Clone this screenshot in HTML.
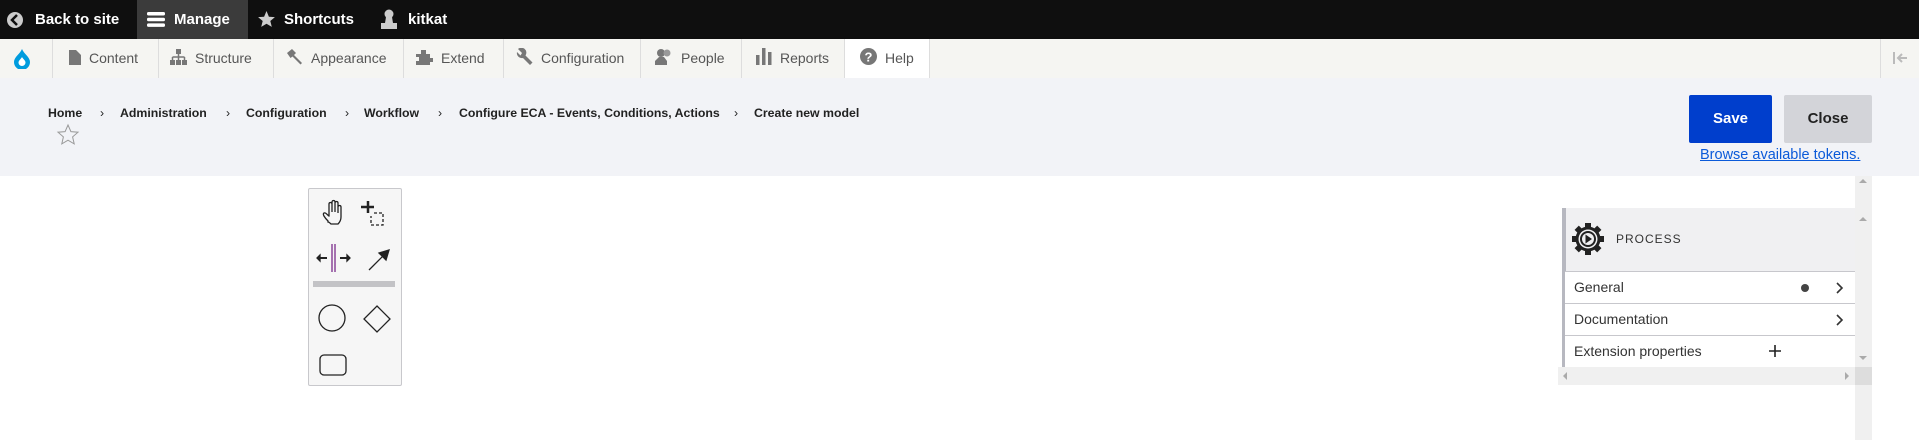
<!DOCTYPE html>
<html><head><meta charset="utf-8"><style>
*{margin:0;padding:0;box-sizing:border-box}
body{width:1919px;height:440px;background:#fff;font-family:"Liberation Sans",sans-serif;position:relative;overflow:hidden}
.abs{position:absolute}
.top{left:0;top:0;width:1919px;height:39px;background:#0f0f0f;color:#fff;font-weight:bold;font-size:15px}
.top span{position:absolute;top:11px}
.bar{left:0;top:39px;width:1919px;height:39px;background:#f5f5f2;box-shadow:0 2px 3px rgba(0,0,0,.35);font-size:14px;color:#565656}
.it{position:absolute;top:0;height:39px;border-right:1px solid #ddd;padding-left:16px;line-height:39px;white-space:nowrap}
.it svg{vertical-align:-2px;margin-right:8px}
.gray{left:0;top:78px;width:1919px;height:98px;background:#f2f3f7}
.bc{position:absolute;top:106px;font-size:12.3px;font-weight:bold;color:#222;white-space:nowrap}
.sep{font-weight:normal}
.row{position:absolute;left:1565px;width:290px;height:32px;border-top:1px solid #c7c7cc;background:#fff;font-size:14px;color:#333;line-height:31px;padding-left:9px}
</style></head><body>
<div class="abs top">
<svg class="abs" style="left:6px;top:11px" width="18" height="18"><circle cx="9" cy="9" r="8" fill="#ccc"/><path d="M11 4L6 9l5 5" stroke="#0f0f0f" stroke-width="2.5" fill="none"/></svg>
<span style="left:35px">Back to site</span>
<div class="abs" style="left:137px;top:0;width:111px;height:39px;background:#3b3b3b"></div>
<svg class="abs" style="left:147px;top:12px" width="18" height="15"><rect y="0" width="18" height="3.5" rx="1.5" fill="#fff"/><rect y="5.7" width="18" height="3.5" rx="1.5" fill="#fff"/><rect y="11.4" width="18" height="3.5" rx="1.5" fill="#fff"/></svg>
<span style="left:174px">Manage</span>
<svg class="abs" style="left:257px;top:10px" width="19" height="18"><path d="M9.5 1l2.4 5.7 6 .4-4.6 3.9 1.5 5.9-5.3-3.2-5.3 3.2 1.5-5.9L1.1 7.1l6-.4z" fill="#ccc"/></svg>
<span style="left:284px">Shortcuts</span>
<svg class="abs" style="left:381px;top:9px" width="16" height="20"><circle cx="8" cy="5" r="4.5" fill="#ccc"/><path d="M5 8h6l1 6h4v6H0v-6h4z" fill="#ccc"/></svg>
<span style="left:408px">kitkat</span>
</div>
<div class="abs bar">
<div class="it" style="left:0;width:53px;padding:0"><svg style="position:absolute;left:13px;top:9px" width="18" height="21"><path d="M9 1c2 5 8 8 8 13a8 8 0 0 1-16 0C1 9 7 6 9 1z" fill="#009cde"/><path d="M9 9c1 2 3.5 3.5 3.5 5.5a3.5 3.5 0 0 1-7 0c0-2 2.5-3.5 3.5-5.5z" fill="#fff"/></svg></div>
<div class="it" style="left:53px;width:106px"><svg width="12" height="15"><path d="M0 0h7l5 5v10H0z" fill="#777"/></svg>Content</div>
<div class="it" style="left:159px;width:115px;padding-left:11px"><svg width="17" height="16"><rect x="6" y="0" width="5" height="5" fill="#777"/><path d="M8.5 5v3M2.5 8h12M2.5 8v3M8.5 8v3M14.5 8v3" stroke="#777" stroke-width="1.5"/><rect x="0" y="11" width="5" height="5" fill="#777"/><rect x="6" y="11" width="5" height="5" fill="#777"/><rect x="12" y="11" width="5" height="5" fill="#777"/></svg>Structure</div>
<div class="it" style="left:274px;width:130px;padding-left:12px"><svg width="17" height="17"><path d="M1 5l5-4 4 4-2 2 8 8-1.5 1.5-8-8-2 1.5z" fill="#777"/></svg>Appearance</div>
<div class="it" style="left:404px;width:100px;padding-left:12px"><svg width="17" height="16"><path d="M0 5h5V1h5v4h4v4h3v4h-3v3H0v-4h3V8H0z" fill="#777"/></svg>Extend</div>
<div class="it" style="left:504px;width:137px;padding-left:12px"><svg width="17" height="17"><path d="M2 1l4 4-1.5 2.5L1 4A5 5 0 0 0 7 10l7 7 2.5-2.5-7-7A5 5 0 0 0 2 1z" fill="#777"/></svg>Configuration</div>
<div class="it" style="left:641px;width:101px;padding-left:14px"><svg width="18" height="17"><circle cx="6" cy="5" r="4" fill="#777"/><path d="M0 17v-4l4-4h5l3 4v4z" fill="#777"/><circle cx="12" cy="5" r="3.5" fill="#999"/></svg>People</div>
<div class="it" style="left:742px;width:103px;padding-left:14px"><svg width="16" height="17"><rect x="0" y="7" width="3.5" height="10" fill="#777"/><rect x="6" y="0" width="3.5" height="17" fill="#777"/><rect x="12" y="4" width="3.5" height="13" fill="#777"/></svg>Reports</div>
<div class="it" style="left:845px;width:85px;background:#fff;padding-left:15px"><svg width="17" height="17"><circle cx="8.5" cy="8.5" r="8.5" fill="#777"/><text x="4.5" y="13.5" font-size="13" font-weight="bold" fill="#fff" font-family="Liberation Sans">?</text></svg>Help</div>
<div class="abs" style="left:1880px;top:0;width:39px;height:39px;border-left:1px solid #ddd"><svg style="position:absolute;left:12px;top:13px" width="14" height="12"><rect x="0" y="0" width="2" height="12" fill="#bbb"/><path d="M5 6h9M9 2L5 6l4 4" stroke="#bbb" stroke-width="2" fill="none"/></svg></div>
</div>
<div class="abs gray"></div>
<div class="bc" style="left:48px">Home</div>
<div class="bc sep" style="left:100px">›</div>
<div class="bc" style="left:120px">Administration</div>
<div class="bc sep" style="left:226px">›</div>
<div class="bc" style="left:246px">Configuration</div>
<div class="bc sep" style="left:345px">›</div>
<div class="bc" style="left:364px">Workflow</div>
<div class="bc sep" style="left:438px">›</div>
<div class="bc" style="left:459px">Configure ECA - Events, Conditions, Actions</div>
<div class="bc sep" style="left:734px">›</div>
<div class="bc" style="left:754px">Create new model</div>
<svg class="abs" style="left:56px;top:123px" width="24" height="24"><path d="M12 2l2.9 6.6 7.1.6-5.4 4.7 1.6 7-6.2-3.7-6.2 3.7 1.6-7L2 9.2l7.1-.6z" fill="none" stroke="#999" stroke-width="1"/></svg>
<div class="abs" style="left:1689px;top:95px;width:83px;height:48px;background:#003ecc;border-radius:2px;color:#fff;font-weight:bold;font-size:15px;text-align:center;line-height:48px">Save</div>
<div class="abs" style="left:1784px;top:95px;width:88px;height:48px;background:#d3d4d9;border-radius:2px;color:#222;font-weight:bold;font-size:15px;text-align:center;line-height:48px">Close</div>
<div class="abs" style="left:1700px;top:147px;font-size:14.5px;color:#0b5ad9;text-decoration:underline">Browse available tokens.</div>
<div class="abs" style="left:308px;top:188px;width:94px;height:198px;background:#f6f6f6;border:1px solid #c8c8cc;border-radius:2px"></div>
<svg class="abs" style="left:308px;top:188px" width="94" height="198" fill="none" stroke="#222" stroke-width="1.3">
<g transform="translate(5,5)"><path d="M15 28c-3-3-6-7-4-8s4 3 5 3V11c0-2 3-2 3 0v8V9c0-2 3-2 3 0v10-9c0-2 3-2 3 0v10-6c0-2 3-2 3 0v10c0 4-2 6-3 7H18c-1-1-2-2-3-2z"/></g>
<g transform="translate(8,3)"><path d="M52 10v12M45 16h13" stroke-width="2.5"/><path d="M58 22h9v12H55v-9" stroke-dasharray="3 2"/></g>
<g transform="translate(0,10)"><path d="M24 46v28M27 46v28" stroke="#7a2b8a"/><path d="M10 60h9M32 60h9" stroke-width="2"/><path d="M12 57l-3 3 3 3zM39 57l3 3-3 3z" fill="#222"/></g>
<g transform="translate(6,8)"><path d="M55 74l17-17"/><path d="M75 54l-10 3 7 7z" fill="#222"/></g>
<rect x="5" y="93" width="82" height="6" fill="#c3c3c6" stroke="none"/>
<circle cx="24" cy="130" r="13"/><path d="M69 118l13 13-13 13-13-13z"/>
<rect x="12" y="167" width="26" height="20" rx="4"/>
</svg>
<div class="abs" style="left:1855px;top:176px;width:17px;height:264px;background:#f0f0f0"></div>
<div class="abs" style="left:1859px;top:179px;border:4px solid transparent;border-bottom-color:#aaa;border-top:0"></div>
<div class="abs" style="left:1562px;top:208px;width:293px;height:159px;background:#f0f0f2;border-left:4px solid #b7b8c0"></div>
<div class="abs" style="left:1859px;top:217px;border:4px solid transparent;border-bottom-color:#aaa;border-top:0"></div>
<div class="abs" style="left:1859px;top:356px;border:4px solid transparent;border-top-color:#aaa;border-bottom:0"></div>
<svg class="abs" style="left:1571px;top:222px" width="34" height="34"><g fill="#222"><circle cx="17" cy="17" r="12.5"/><g stroke="#222" stroke-width="6"><path d="M17 1v32M1 17h32M5.7 5.7l22.6 22.6M28.3 5.7L5.7 28.3"/></g></g><circle cx="17" cy="17" r="9.5" fill="#f0f0f2"/><circle cx="17" cy="17" r="8" fill="#222"/><circle cx="17" cy="17" r="6" fill="#f0f0f2"/><path d="M14.5 12.5v9l6.5-4.5z" fill="#222"/></svg>
<div class="abs" style="left:1616px;top:232px;font-size:12px;letter-spacing:1px;color:#333">PROCESS</div>
<div class="row" style="top:271px">General<span style="position:absolute;left:236px;top:12px;width:8px;height:8px;border-radius:50%;background:#444"></span><svg style="position:absolute;left:271px;top:10px" width="8" height="12"><path d="M1 1l5 5-5 5" stroke="#333" stroke-width="1.6" fill="none"/></svg></div>
<div class="row" style="top:303px">Documentation<svg style="position:absolute;left:271px;top:10px" width="8" height="12"><path d="M1 1l5 5-5 5" stroke="#333" stroke-width="1.6" fill="none"/></svg></div>
<div class="row" style="top:335px">Extension properties<svg style="position:absolute;left:204px;top:9px" width="12" height="12"><path d="M6 0v12M0 6h12" stroke="#222" stroke-width="1.6"/></svg></div>
<div class="abs" style="left:1558px;top:367px;width:297px;height:18px;background:#f0f0f0"></div>
<div class="abs" style="left:1563px;top:372px;border:4px solid transparent;border-right-color:#aaa;border-left:0"></div>
<div class="abs" style="left:1845px;top:372px;border:4px solid transparent;border-left-color:#aaa;border-right:0"></div>
<div class="abs" style="left:1855px;top:367px;width:17px;height:18px;background:#ddd"></div>
</body></html>
